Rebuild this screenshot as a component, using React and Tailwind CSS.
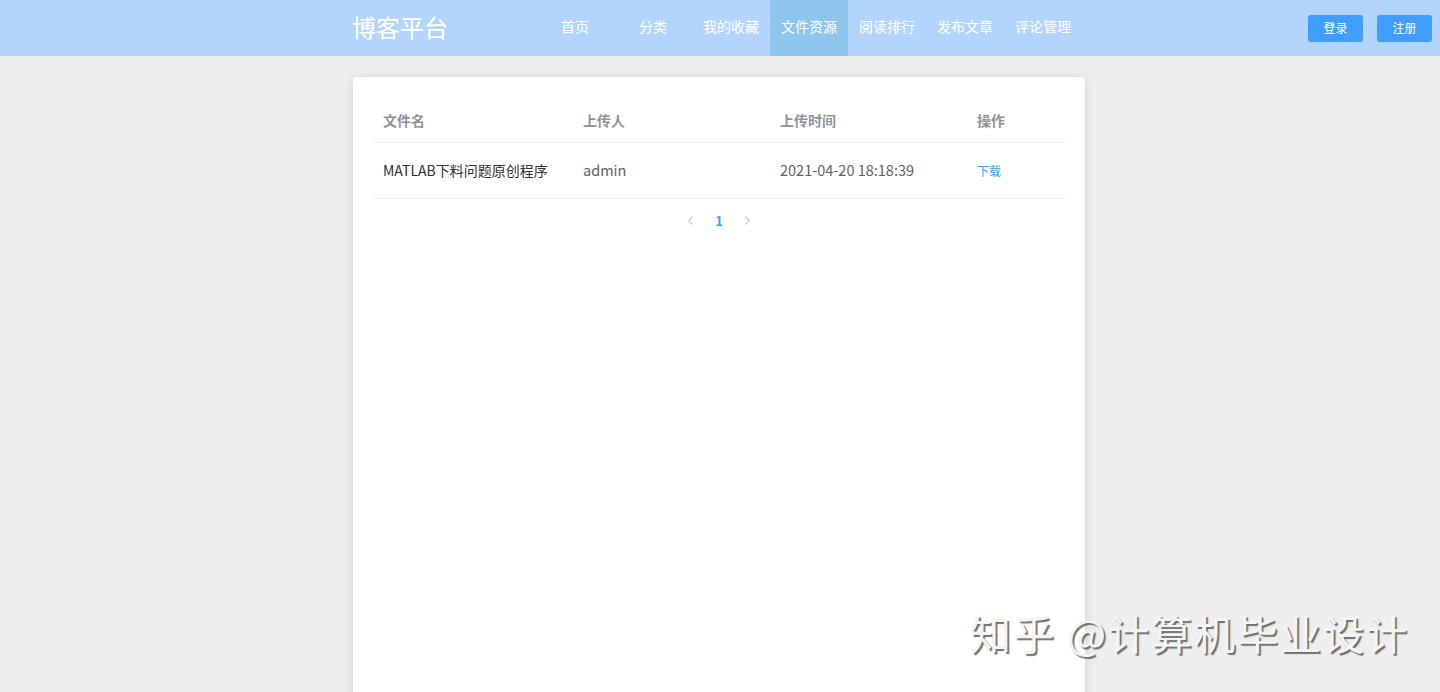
import { ChevronLeft, ChevronRight } from "lucide-react";

const NAV_ITEMS = ["首页", "分类", "我的收藏", "文件资源", "阅读排行", "发布文章", "评论管理"];

const FILES = [
  {
    name: "MATLAB下料问题原创程序",
    uploader: "admin",
    time: "2021-04-20 18:18:39",
  },
];

function Header() {
  return (
    <header className="flex h-14 items-center bg-[#b3d4fc]">
      <div className="w-[352px] shrink-0" />
      <h1 className="w-[184px] shrink-0 pb-[3px] text-[24px] leading-none text-white">博客平台</h1>
      <nav className="flex h-full">
        {NAV_ITEMS.map((item) => {
          const active = item === "文件资源";
          return (
            <a
              key={item}
              href="#"
              className={`flex h-full w-[78px] items-center justify-center pb-[3px] text-[14px] text-white ${
                active ? "bg-[#8ec5ec]" : ""
              }`}
            >
              {item}
            </a>
          );
        })}
      </nav>
      <div className="ml-auto mr-2 flex gap-[14px]">
        <button className="h-[27px] w-[55px] rounded-[3px] bg-[#409eff] text-[12px] text-white">
          登录
        </button>
        <button className="h-[27px] w-[55px] rounded-[3px] bg-[#409eff] text-[12px] text-white">
          注册
        </button>
      </div>
    </header>
  );
}

function FileTable() {
  return (
    <table className="w-full table-fixed border-collapse text-[14px]">
      <colgroup>
        <col className="w-[200px]" />
        <col className="w-[197px]" />
        <col className="w-[197px]" />
        <col />
      </colgroup>
      <thead>
        <tr className="h-[45px] border-b border-[#ebeef5] text-left font-bold text-[#909399]">
          <th className="px-[10px] pt-[2px]">文件名</th>
          <th className="px-[10px] pt-[2px]">上传人</th>
          <th className="px-[10px] pt-[2px]">上传时间</th>
          <th className="px-[10px] pt-[2px]">操作</th>
        </tr>
      </thead>
      <tbody>
        {FILES.map((file) => (
          <tr key={file.name} className="h-[56px] border-b border-[#ebeef5] text-[14.5px] text-[#606266]">
            <td className="px-[10px] text-[14px] text-[#303133]">{file.name}</td>
            <td className="px-[10px]">{file.uploader}</td>
            <td className="px-[10px]">{file.time}</td>
            <td className="px-[10px]">
              <a href="#" className="text-[12px] text-[#409eff]">
                下载
              </a>
            </td>
          </tr>
        ))}
      </tbody>
    </table>
  );
}

export default function App() {
  return (
    <div
      className="relative h-[692px] overflow-hidden bg-[#eeeeee]"
      style={{ fontFamily: '"Microsoft YaHei", "Noto Sans CJK SC", "Noto Sans", sans-serif' }}
    >
      <Header />
      <main className="flex justify-center pt-[21px]">
        <section className="ml-[-2px] h-[640px] w-[732px] rounded-[4px] bg-white px-5 pt-[20px] shadow-[0_2px_12px_rgba(0,0,0,0.12)]">
          <FileTable />
          <div className="mt-[12px] flex items-center justify-center gap-[14px] text-[#a8abb2]">
            <ChevronLeft size={15} strokeWidth={1.5} />
            <span className="w-[14px] text-center text-[13px] font-bold text-[#409eff]">1</span>
            <ChevronRight size={15} strokeWidth={1.5} />
          </div>
        </section>
      </main>
      <div
        className="pointer-events-none absolute left-[970px] top-[612px] text-[41px] leading-none tracking-[2px] text-[#f4f4f4]"
        style={{ textShadow: "2px 2px 1px rgba(90,90,90,0.85)" }}
      >
        知乎 @计算机毕业设计
      </div>
    </div>
  );
}
